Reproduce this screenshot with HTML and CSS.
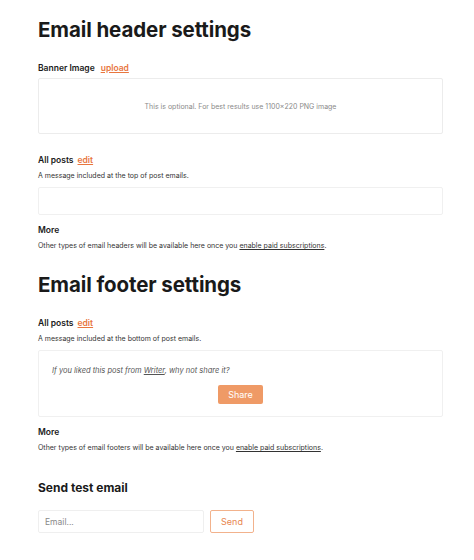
FILE: index.html
```html
<!DOCTYPE html>
<html>
<head>
<meta charset="utf-8">
<link rel="stylesheet" href="styles.css">
</head>
<body>
<div class="page">
  <h1 class="title">Email header settings</h1>
  <div class="label first"><span>Banner Image</span><a class="link" href="#">upload</a></div>
  <div class="banner">This is optional. For best results use 1100x220 PNG image</div>

  <div class="label"><span>All posts</span><a class="link small-gap" href="#">edit</a></div>
  <p class="hint">A message included at the top of post emails.</p>
  <div class="box empty"></div>

  <div class="label more">More</div>
  <p class="hint">Other types of email headers will be available here once you <a class="plain" href="#">enable paid subscriptions</a>.</p>

  <h1 class="title second">Email footer settings</h1>
  <div class="label first"><span>All posts</span><a class="link small-gap" href="#">edit</a></div>
  <p class="hint">A message included at the bottom of post emails.</p>
  <div class="box footer">
    <p class="italic">If you liked this post from <span class="u">Writer</span>, why not share it?</p>
    <div class="share-row"><span class="share">Share</span></div>
  </div>

  <div class="label more">More</div>
  <p class="hint">Other types of email footers will be available here once you <a class="plain" href="#">enable paid subscriptions</a>.</p>

  <h2 class="subtitle">Send test email</h2>
  <div class="send-row">
    <div class="input">Email...</div>
    <div class="send">Send</div>
  </div>
</div>
</body>
</html>
```
FILE: styles.css
```css
* { box-sizing: border-box; }
html, body { margin: 0; padding: 0; background: #fff; }
body { font-family: Inter, "Noto Sans", sans-serif; color: #1a1a1a; }
.page { width: 405px; margin-left: 38px; padding-top: 15px; }
.title { font-size: 20.5px; font-weight: 700; line-height: 30px; margin: 0; letter-spacing: -0.1px; }
.title.second { margin-top: 19px; }
.label { font-size: 8.5px; font-weight: 600; line-height: 12px; display: flex; gap: 6px; align-items: baseline; }
.label.first { margin-top: 17px; }
.label .link { color: #e8763f; text-decoration: underline; font-weight: 600; }
.label .small-gap { margin-left: -2px; }
.banner { margin-top: 4px; height: 56px; border: 1px solid #ececec; border-radius: 2px; display: flex; align-items: center; justify-content: center; font-size: 7px; color: #8a8a8a; }
.label:not(.first):not(.more) { margin-top: 20px; }
.hint { font-size: 7px; color: #333; margin: 5px 0 0; line-height: 10px; }
.box { border: 1px solid #f0f0f0; border-radius: 2px; margin-top: 6px; }
.box.empty { height: 28px; }
.label.more { margin-top: 9px; }
.plain { color: #333; text-decoration: underline; }
.footer { padding: 15px 13px 12px; }
.italic { margin: 0; font-size: 7.5px; font-style: italic; color: #555; line-height: 10px; }
.u { text-decoration: underline; }
.share-row { display: flex; justify-content: center; margin-top: 9px; }
.share { background: #ef9a66; color: #fff; font-size: 9px; width: 45px; height: 19px; border-radius: 2px; display: flex; align-items: center; justify-content: center; }
.subtitle { font-size: 12px; font-weight: 700; margin: 27px 0 0; line-height: 16px; }
.send-row { display: flex; gap: 6px; margin-top: 14px; }
.input { width: 166px; height: 23px; border: 1px solid #efefef; border-radius: 2px; font-size: 8.5px; color: #888; padding-left: 6px; display: flex; align-items: center; }
.send { width: 44px; height: 23px; border: 1px solid #f2b28c; border-radius: 2px; font-size: 9px; color: #e8864f; display: flex; align-items: center; justify-content: center; }
```
